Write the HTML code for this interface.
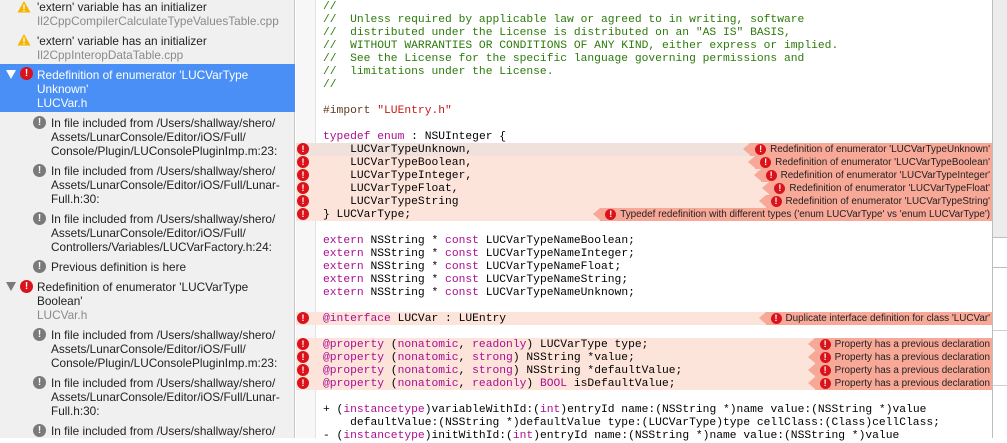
<!DOCTYPE html>
<html><head><meta charset="utf-8"><style>
*{margin:0;padding:0;box-sizing:border-box}
body{width:1007px;height:438px;overflow:hidden;background:#fff;position:relative;font-family:"Liberation Sans",sans-serif}
#side{position:absolute;left:0;top:0;width:295px;height:438px;background:#f0f0f0;border-right:1px solid #c8c8c8}
.it{position:absolute;font-size:11.8px;line-height:14px;color:#222}
.it .sub{color:#8a8a8a}
.sel{position:absolute;left:0;top:64px;width:295px;height:48px;background:#4a8ff5}
.ic{position:absolute;width:13px;height:13px;border-radius:50%;color:#fff;font-size:10px;font-weight:bold;text-align:center;line-height:13px}
.er{background:#d9121b}
.gr{background:#7a7a7a}
#gut{position:absolute;left:296px;top:0;width:20px;height:438px;background:#f7f7f7;border-right:1px solid #e2e2e2}
.ln{position:absolute;left:296px;width:696px;height:13px}
.code{position:absolute;left:323px;font-family:"Liberation Mono",monospace;font-size:11.3px;line-height:13px;white-space:pre;color:#000}
.c{color:#2c7a0a}.k{color:#aa0d91}.s{color:#c41a16}.p{color:#643820}
.ann{position:absolute;right:15px;height:13px;background:#f8a897;font-size:9.9px;line-height:13px;color:#222;padding:0 2px 0 20px;white-space:nowrap}
.ann:before{content:"";position:absolute;left:-7px;top:0;border-right:7px solid #f8a897;border-top:6.5px solid transparent;border-bottom:6.5px solid transparent}
.ann i{position:absolute;left:5px;top:1px;width:11px;height:11px;border-radius:50%;background:#d9121b;color:#fff;font-style:normal;font-weight:bold;font-size:9px;line-height:11px;text-align:center}
.gi{position:absolute;left:297px;width:12px;height:12px;border-radius:50%;background:#d9121b;color:#fff;font-size:9px;font-weight:bold;text-align:center;line-height:12px}
#rp{position:absolute;left:992px;top:0;width:15px;height:438px;border-left:1px solid #bdbdbd;background:#fff}
</style></head><body>
<div id="side">
<div class="sel"></div>
<svg style="position:absolute;left:17px;top:0" width="14" height="13"><path d="M7 1L13.5 12.5H0.5Z" fill="#f5b400"/><rect x="6.3" y="4.5" width="1.4" height="4.5" fill="#fff"/><rect x="6.3" y="10" width="1.4" height="1.4" fill="#fff"/></svg>
<div class="it" style="left:37px;top:0px">'extern' variable has an initializer<br><span class="sub">Il2CppCompilerCalculateTypeValuesTable.cpp</span></div>
<svg style="position:absolute;left:17px;top:33px" width="14" height="13"><path d="M7 1L13.5 12.5H0.5Z" fill="#f5b400"/><rect x="6.3" y="4.5" width="1.4" height="4.5" fill="#fff"/><rect x="6.3" y="10" width="1.4" height="1.4" fill="#fff"/></svg>
<div class="it" style="left:37px;top:34px">'extern' variable has an initializer<br><span class="sub">Il2CppInteropDataTable.cpp</span></div>
<svg style="position:absolute;left:6px;top:70px" width="10" height="9"><path d="M0 0H10L5 9Z" fill="#fff"/></svg>
<div class="ic er" style="left:20px;top:67px">!</div>
<div class="it" style="left:37px;top:68px;color:#fff">Redefinition of enumerator 'LUCVarType<br>Unknown'<br>LUCVar.h</div>
<div class="ic gr" style="left:33px;top:116px">!</div>
<div class="it" style="left:51px;top:116px">In file included from /Users/shallway/shero/<br>Assets/LunarConsole/Editor/iOS/Full/<br>Console/Plugin/LUConsolePluginImp.m:23:</div>
<div class="ic gr" style="left:33px;top:164px">!</div>
<div class="it" style="left:51px;top:164px">In file included from /Users/shallway/shero/<br>Assets/LunarConsole/Editor/iOS/Full/Lunar-<br>Full.h:30:</div>
<div class="ic gr" style="left:33px;top:212px">!</div>
<div class="it" style="left:51px;top:212px">In file included from /Users/shallway/shero/<br>Assets/LunarConsole/Editor/iOS/Full/<br>Controllers/Variables/LUCVarFactory.h:24:</div>
<div class="ic gr" style="left:33px;top:260px">!</div>
<div class="it" style="left:51px;top:260px">Previous definition is here</div>
<svg style="position:absolute;left:6px;top:282px" width="10" height="9"><path d="M0 0H10L5 9Z" fill="#7a7a7a"/></svg>
<div class="ic er" style="left:20px;top:280px">!</div>
<div class="it" style="left:37px;top:280px">Redefinition of enumerator 'LUCVarType<br>Boolean'<br><span class="sub">LUCVar.h</span></div>
<div class="ic gr" style="left:33px;top:328px">!</div>
<div class="it" style="left:51px;top:328px">In file included from /Users/shallway/shero/<br>Assets/LunarConsole/Editor/iOS/Full/<br>Console/Plugin/LUConsolePluginImp.m:23:</div>
<div class="ic gr" style="left:33px;top:376px">!</div>
<div class="it" style="left:51px;top:376px">In file included from /Users/shallway/shero/<br>Assets/LunarConsole/Editor/iOS/Full/Lunar-<br>Full.h:30:</div>
<div class="ic gr" style="left:33px;top:424px">!</div>
<div class="it" style="left:51px;top:424px">In file included from /Users/shallway/shero/</div>
</div>
<div id="gut"></div>
<div class="ln" style="top:143px;background:#f1e1dd"></div>
<div class="ln" style="top:156px;height:52px;background:#fde4db"></div>
<div class="ln" style="top:208px;background:#fde4db"></div>
<div class="ln" style="top:312px;background:#fde4db"></div>
<div class="ln" style="top:338px;height:52px;background:#fde4db"></div>
<div class="gi" style="top:143px">!</div><div class="gi" style="top:156px">!</div><div class="gi" style="top:169px">!</div><div class="gi" style="top:182px">!</div><div class="gi" style="top:195px">!</div><div class="gi" style="top:208px">!</div>
<div class="gi" style="top:312px">!</div><div class="gi" style="top:338px">!</div><div class="gi" style="top:351px">!</div><div class="gi" style="top:364px">!</div><div class="gi" style="top:377px">!</div>
<div class="code" style="top:1px"><span class="c">//
//  Unless required by applicable law or agreed to in writing, software
//  distributed under the License is distributed on an "AS IS" BASIS,
//  WITHOUT WARRANTIES OR CONDITIONS OF ANY KIND, either express or implied.
//  See the License for the specific language governing permissions and
//  limitations under the License.
//</span>

<span class="p">#import </span><span class="s">"LUEntry.h"</span>

<span class="k">typedef</span> <span class="k">enum</span> : NSUInteger {
    LUCVarTypeUnknown,
    LUCVarTypeBoolean,
    LUCVarTypeInteger,
    LUCVarTypeFloat,
    LUCVarTypeString
} LUCVarType;

<span class="k">extern</span> NSString * <span class="k">const</span> LUCVarTypeNameBoolean;
<span class="k">extern</span> NSString * <span class="k">const</span> LUCVarTypeNameInteger;
<span class="k">extern</span> NSString * <span class="k">const</span> LUCVarTypeNameFloat;
<span class="k">extern</span> NSString * <span class="k">const</span> LUCVarTypeNameString;
<span class="k">extern</span> NSString * <span class="k">const</span> LUCVarTypeNameUnknown;

<span class="k">@interface</span> LUCVar : LUEntry

<span class="k">@property</span> (<span class="k">nonatomic</span>, <span class="k">readonly</span>) LUCVarType type;
<span class="k">@property</span> (<span class="k">nonatomic</span>, <span class="k">strong</span>) NSString *value;
<span class="k">@property</span> (<span class="k">nonatomic</span>, <span class="k">strong</span>) NSString *defaultValue;
<span class="k">@property</span> (<span class="k">nonatomic</span>, <span class="k">readonly</span>) <span class="k">BOOL</span> isDefaultValue;

+ (<span class="k">instancetype</span>)variableWithId:(<span class="k">int</span>)entryId name:(NSString *)name value:(NSString *)value
    defaultValue:(NSString *)defaultValue type:(LUCVarType)type cellClass:(Class)cellClass;
- (<span class="k">instancetype</span>)initWithId:(<span class="k">int</span>)entryId name:(NSString *)name value:(NSString *)value</div>
<div class="ann" style="top:143px"><i>!</i>Redefinition of enumerator 'LUCVarTypeUnknown'</div>
<div class="ann" style="top:156px"><i>!</i>Redefinition of enumerator 'LUCVarTypeBoolean'</div>
<div class="ann" style="top:169px"><i>!</i>Redefinition of enumerator 'LUCVarTypeInteger'</div>
<div class="ann" style="top:182px"><i>!</i>Redefinition of enumerator 'LUCVarTypeFloat'</div>
<div class="ann" style="top:195px"><i>!</i>Redefinition of enumerator 'LUCVarTypeString'</div>
<div class="ann" style="top:208px"><i>!</i>Typedef redefinition with different types ('enum LUCVarType' vs 'enum LUCVarType')</div>
<div class="ann" style="top:312px"><i>!</i>Duplicate interface definition for class 'LUCVar'</div>
<div class="ann" style="top:338px"><i>!</i>Property has a previous declaration</div>
<div class="ann" style="top:351px"><i>!</i>Property has a previous declaration</div>
<div class="ann" style="top:364px"><i>!</i>Property has a previous declaration</div>
<div class="ann" style="top:377px"><i>!</i>Property has a previous declaration</div>
<div id="rp">
<div style="position:absolute;left:0;top:0;width:15px;height:238px;background:#ececec;border-bottom:1px solid #bdbdbd"></div>
<div style="position:absolute;left:0;top:267px;width:15px;border-top:1px solid #bdbdbd"></div>
<div style="position:absolute;left:0;top:330px;width:15px;border-top:1px solid #d0d0d0"></div>
<div style="position:absolute;left:0;top:385px;width:15px;border-top:1px solid #d0d0d0"></div>
</div>
</body></html>
